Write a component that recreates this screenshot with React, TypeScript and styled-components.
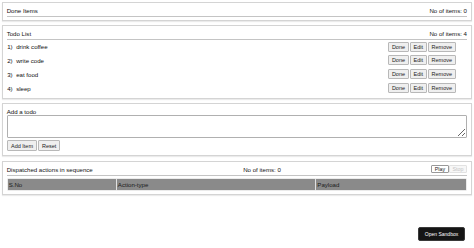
import styled, { createGlobalStyle } from "styled-components";

const GlobalStyle = createGlobalStyle`
  html, body {
    margin: 0;
    padding: 0;
    background: #fff;
  }
  body {
    font-family: "Liberation Sans", Arial, sans-serif;
    font-size: 6.1px;
    line-height: 7px;
    color: #111;
  }
`;

const Page = styled.div`
  display: flex;
  flex-direction: column;
  gap: 4.5px;
  padding: 2px;
`;

const Panel = styled.section`
  border: 1px solid #d4d4d4;
  box-shadow: 0 1px 1px rgba(0, 0, 0, 0.08);
  padding: 3.5px 4px 3px 3.7px;
`;

const Header = styled.div`
  display: flex;
  justify-content: space-between;
  align-items: center;
  padding-bottom: 2px;
  border-bottom: 1px solid #c4c4c4;
`;

const List = styled.div`
  display: flex;
  flex-direction: column;
  padding-top: 0.3px;
`;

const Row = styled.div`
  display: flex;
  align-items: center;
  padding: 1.9px 11px 1.9px 0.5px;
`;

const Index = styled.span`
  width: 9px;
`;

const Label = styled.span`
  flex: 1;
`;

const ButtonGroup = styled.div`
  display: flex;
  gap: 0.5px;
`;

const Btn = styled.button<{ $tall?: boolean }>`
  font-family: "Liberation Sans", Arial, sans-serif;
  font-size: 5.5px;
  line-height: 6px;
  color: #222;
  height: ${(p) => (p.$tall ? "11.7px" : "10px")};
  padding: 0 3px;
  background: #efefef;
  border: 1px solid #b8b8b8;
  border-radius: 1px;
  margin: 0;
`;

const SmallBtn = styled.button`
  font-family: "Liberation Sans", Arial, sans-serif;
  font-size: 5.3px;
  line-height: 5px;
  height: 7.7px;
  padding: 0 2.5px;
  margin: 0;
  background: #fff;
  color: #222;
  border: 1px solid #999;
  border-radius: 1px;

  &:disabled {
    color: #c4c4c4;
    border-color: #e2e2e2;
    background: #f7f7f7;
  }
`;

const Title = styled.div`
  padding-bottom: 0.5px;
`;

const TextArea = styled.textarea`
  display: block;
  box-sizing: border-box;
  width: 100%;
  height: 22.7px;
  margin: 0;
  border: 1px solid #b0b0b0;
  border-radius: 1px;
  resize: vertical;
  font-family: "Liberation Sans", Arial, sans-serif;
  font-size: 6px;
`;

const FormActions = styled.div`
  display: flex;
  gap: 1px;
  padding: 1.6px 0 1px 0.3px;
`;

const Table = styled.table`
  width: 100%;
  margin-top: 2px;
  border-spacing: 1px;
`;

const Th = styled.th<{ $w: string }>`
  width: ${(p) => p.$w};
  background: #8a8a8a;
  color: #1a1a1a;
  font-weight: normal;
  text-align: left;
  height: 10.6px;
  padding: 0 1px;
  font-size: 6.1px;
  box-shadow: 0 0 0 0.5px #d8d8d8;
`;

const Sandbox = styled.button`
  position: fixed;
  right: 9.3px;
  bottom: 7.3px;
  height: 13.4px;
  padding: 0 5.5px;
  background: #151515;
  color: #fff;
  border: 1px solid #3a3a3a;
  border-radius: 2px;
  font-family: "Liberation Sans", Arial, sans-serif;
  font-size: 5px;
`;

const todos = ["drink coffee", "write code", "eat food", "sleep"];

export default function App() {
  return (
    <>
      <GlobalStyle />
      <Page>
        <Panel>
          <Header>
            <span>Done Items</span>
            <span>No of items: 0</span>
          </Header>
        </Panel>

        <Panel>
          <Header>
            <span>Todo List</span>
            <span>No of items: {todos.length}</span>
          </Header>
          <List>
            {todos.map((todo, i) => (
              <Row key={todo}>
                <Index>{i + 1})</Index>
                <Label>{todo}</Label>
                <ButtonGroup>
                  <Btn>Done</Btn>
                  <Btn>Edit</Btn>
                  <Btn>Remove</Btn>
                </ButtonGroup>
              </Row>
            ))}
          </List>
        </Panel>

        <Panel>
          <Title>Add a todo</Title>
          <TextArea />
          <FormActions>
            <Btn $tall>Add Item</Btn>
            <Btn $tall>Reset</Btn>
          </FormActions>
        </Panel>

        <Panel>
          <Header>
            <span>Dispatched actions in sequence</span>
            <span>No of items: 0</span>
            <ButtonGroup>
              <SmallBtn>Play</SmallBtn>
              <SmallBtn disabled>Stop</SmallBtn>
            </ButtonGroup>
          </Header>
          <Table>
            <thead>
              <tr>
                <Th $w="23.7%">S.No</Th>
                <Th $w="43.5%">Action-type</Th>
                <Th $w="32.8%">Payload</Th>
              </tr>
            </thead>
          </Table>
        </Panel>
      </Page>
      <Sandbox>Open Sandbox</Sandbox>
    </>
  );
}
